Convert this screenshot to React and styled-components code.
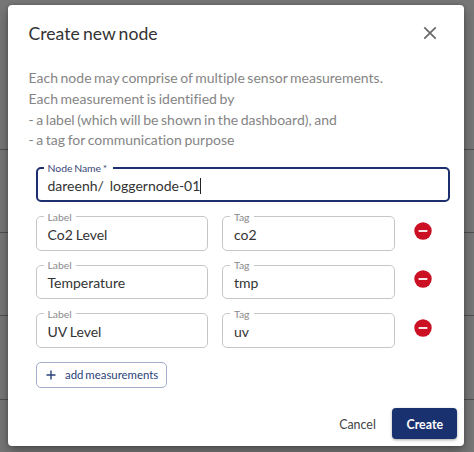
import React from 'react';
import styled, { createGlobalStyle } from 'styled-components';

const measurements = [
  { label: 'Co2 Level', tag: 'co2' },
  { label: 'Temperature', tag: 'tmp' },
  { label: 'UV Level', tag: 'uv' },
];

const Field = ({ label, value, focused, width }) => (
  <FieldStyled $focused={focused} $width={width}>
    <legend>{label}</legend>
    <FieldValue>
      {value}
      {focused && <Caret />}
    </FieldValue>
  </FieldStyled>
);

const App = () => {
  return (
    <Backdrop>
      <GlobalStyle />
      <Dialog>
        <Header>
          <Title>Create new node</Title>
          <CloseButton aria-label="close">
            <svg width="14" height="14" viewBox="0 0 14 14">
              <path d="M1.3 1.3 12.7 12.7M12.7 1.3 1.3 12.7" fill="none" stroke="#686868" strokeWidth="1.7" />
            </svg>
          </CloseButton>
        </Header>
        <Description>
          <p>Each node may comprise of multiple sensor measurements.</p>
          <p>Each measurement is identified by</p>
          <p>- a label (which will be shown in the dashboard), and</p>
          <p>- a tag for communication purpose</p>
        </Description>
        <Form>
          <Field label="Node Name *" value="dareenh/  loggernode-01" width="414.5px" focused />
          {measurements.map(({ label, tag }) => (
            <Row key={tag}>
              <Field label="Label" value={label} width="172.5px" />
              <Field label="Tag" value={tag} width="172.5px" />
              <RemoveButton aria-label="remove">
                <svg width="18" height="18" viewBox="0 0 18 18">
                  <circle cx="9" cy="9" r="8.7" fill="#cb1024" />
                  <path d="M4.6 9h8.8" stroke="#fff" strokeWidth="1.8" />
                </svg>
              </RemoveButton>
            </Row>
          ))}
          <AddButton>
            <svg width="10" height="10" viewBox="0 0 10 10">
              <path d="M5 .5v9M.5 5h9" stroke="#2a4379" strokeWidth="1.4" />
            </svg>
            <span>add measurements</span>
          </AddButton>
        </Form>
        <Actions>
          <CancelButton>Cancel</CancelButton>
          <CreateButton>Create</CreateButton>
        </Actions>
      </Dialog>
    </Backdrop>
  );
};

export default App;

const GlobalStyle = createGlobalStyle`
  * {
    box-sizing: border-box;
  }

  body {
    margin: 0;
    font-family: Lato, sans-serif;
    font-variant-ligatures: none;
    word-spacing: -1px;
  }

  button {
    font-family: inherit;
    word-spacing: inherit;
    padding: 0;
    border: none;
    background: none;
  }
`;

const Backdrop = styled.div`
  width: 474px;
  height: 452px;
  overflow: hidden;
  padding: 4.7px 9.7px 5.5px 7.5px;
  /* dimmed table rows behind the dialog */
  background:
    repeating-linear-gradient(to bottom, #505050 0 1px, transparent 1px 83.2px) 0 149px no-repeat,
    #777;
`;

const Dialog = styled.div`
  display: flex;
  flex-direction: column;
  height: 441.8px;
  background: #fff;
  border-radius: 4px;
  box-shadow: 0 5px 12px rgba(0, 0, 0, 0.35), 0 0 3px rgba(0, 0, 0, 0.2);
`;

const Header = styled.div`
  display: flex;
  justify-content: space-between;
  align-items: center;
  height: 57px;
  padding: 0 27px 0 21px;
`;

const Title = styled.h2`
  margin: 0;
  padding-top: 2px;
  font-size: 17.6px;
  font-weight: 400;
  line-height: 24px;
  word-spacing: -1.3px;
  color: #333;
`;

const CloseButton = styled.button`
  display: flex;
`;

const Description = styled.div`
  padding: 6.4px 21px 0;
  font-size: 14px;
  line-height: 20.8px;
  color: #858585;

  p {
    margin: 0;
    white-space: nowrap;
  }
`;

const Form = styled.div`
  display: flex;
  flex-direction: column;
  gap: 8.6px;
  padding: 10.8px 14px 0 28px;
`;

const Row = styled.div`
  display: flex;
  gap: 14px;
`;

const FieldStyled = styled.fieldset`
  width: ${({ $width }) => $width};
  height: 40px;
  min-width: 0;
  margin: 0;
  padding: 0 0 0 ${({ $focused }) => ($focused ? '6px' : '7px')};
  border: ${({ $focused }) => ($focused ? '2px solid #1d2f6f' : '1px solid #c6c6c6')};
  border-radius: 5px;

  legend {
    height: 12px;
    padding: 0 ${({ $focused }) => ($focused ? '6px' : '4px')} 0 4px;
    font-size: 10.4px;
    line-height: 12px;
    color: ${({ $focused }) => ($focused ? '#3b4777' : '#8a8a8a')};
  }
`;

const FieldValue = styled.div`
  display: flex;
  align-items: center;
  height: 23px;
  padding-left: 4px;
  font-size: 14px;
  word-spacing: -0.6px;
  white-space: pre;
  color: #333;
`;

const Caret = styled.span`
  width: 1px;
  height: 16px;
  background: #222;
`;

const RemoveButton = styled.button`
  display: flex;
  margin: 11px 0 0 5px;
  align-self: flex-start;
`;

const AddButton = styled.button`
  display: flex;
  align-items: center;
  gap: 9.5px;
  width: 131px;
  height: 26px;
  margin-top: 5.2px;
  && {
    padding-left: 9px;
    border: 1px solid #a4aecb;
  }
  border-radius: 5px;
  font-size: 11.4px;
  white-space: nowrap;
  color: #2a4379;
`;

const Actions = styled.div`
  display: flex;
  justify-content: flex-end;
  align-items: center;
  gap: 16.5px;
  margin-top: auto;
  padding: 0 7px 7px 0;
`;

const CancelButton = styled.button`
  && {
    padding-top: 2px;
  }
  font-size: 12.4px;
  color: #444;
`;

const CreateButton = styled.button`
  width: 65px;
  height: 31px;
  && {
    padding-top: 1px;
    background: #19316f;
  }
  border-radius: 4px;
  box-shadow: 0 1px 3px rgba(0, 0, 0, 0.35);
  font-size: 12.4px;
  font-weight: 700;
  color: #fff;
`;
